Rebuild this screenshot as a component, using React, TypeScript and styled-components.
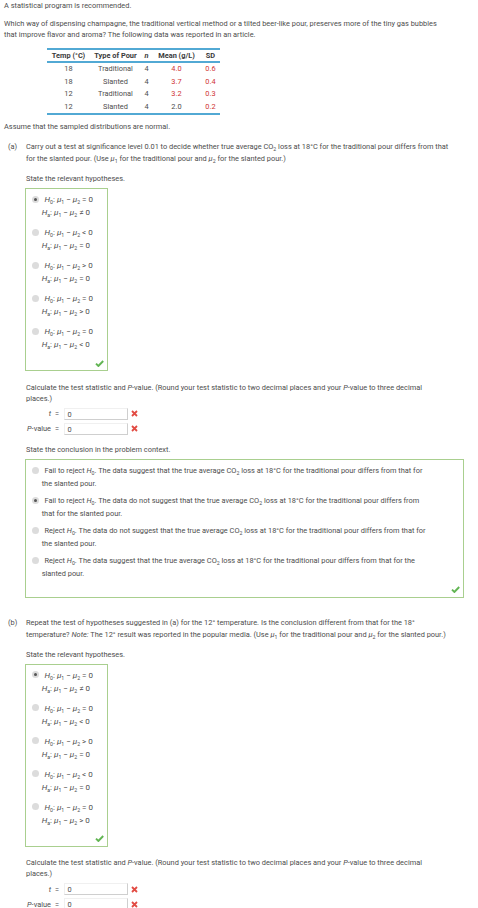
import React from "react";
import styled, { createGlobalStyle } from "styled-components";

const GlobalStyle = createGlobalStyle`
  html, body {
    margin: 0;
    padding: 0;
    background: #ffffff;
  }
  body {
    font-family: Roboto, "Noto Sans", "Liberation Sans", sans-serif;
    font-size: 7.4px;
    color: #4d4d4d;
  }
  sub {
    font-size: 5.2px;
    line-height: 0;
    vertical-align: -1.8px;
  }
`;

const Page = styled.div`
  width: 478px;
  box-sizing: border-box;
  padding: 0 0 12px 4px;
`;

const Para = styled.p<{ $mt?: number; $lh?: number }>`
  margin: ${(p) => p.$mt ?? 0}px 0 0;
  line-height: ${(p) => p.$lh ?? 11}px;
  white-space: nowrap;
`;

const I = styled.i`
  font-style: italic;
`;

const DataTable = styled.table`
  margin: 8.5px 0 0 43px;
  border-collapse: collapse;
  table-layout: fixed;
  width: 173px;
  border-top: 2px solid #52a9d4;
  border-bottom: 2px solid #52a9d4;
`;

const Th = styled.th<{ $w: number }>`
  width: ${(p) => p.$w}px;
  height: 11px;
  padding: 0;
  font-weight: 700;
  color: #3a3a3a;
  text-align: center;
  line-height: 11px;
  white-space: nowrap;
  border-bottom: 2px solid #52a9d4;
`;

const Td = styled.td<{ $red?: boolean }>`
  height: 12.6px;
  padding: 0;
  text-align: center;
  line-height: 12.6px;
  color: ${(p) => (p.$red ? "#d03434" : "#4d4d4d")};
`;

const Part = styled.section<{ $mt: number }>`
  display: flex;
  margin-top: ${(p) => p.$mt}px;
`;

const PartLabel = styled.div`
  flex: 0 0 18px;
  padding-left: 4px;
  line-height: 12px;
`;

const PartBody = styled.div`
  flex: 1;
  min-width: 0;
`;

const ChoiceBox = styled.div<{ $w: number; $mt?: number }>`
  width: ${(p) => p.$w}px;
  margin: ${(p) => p.$mt ?? 4}px 0 0 -1px;
  box-sizing: border-box;
  border: 1px solid #a9cf8f;
  padding: 4px 3px 2px 0;
`;

const HypOption = styled.div`
  padding-left: 15.7px;
  margin-bottom: 7px;
  font-size: 8px;
  line-height: 13px;
  white-space: nowrap;

  &:last-of-type {
    margin-bottom: 0;
  }
`;

const ConclOption = styled.div`
  padding-left: 15.7px;
  margin-bottom: 4px;
  line-height: 13px;
  white-space: nowrap;

  &:last-of-type {
    margin-bottom: 0;
  }
`;

const Radio = styled.span<{ $checked?: boolean }>`
  display: inline-block;
  position: relative;
  width: 7px;
  height: 7px;
  border-radius: 50%;
  background: #dcdcdc;
  vertical-align: middle;
  margin: -2px 6px 0 -10.2px;

  &::after {
    content: "";
    display: ${(p) => (p.$checked ? "block" : "none")};
    position: absolute;
    left: 2px;
    top: 2px;
    width: 3px;
    height: 3px;
    border-radius: 50%;
    background: #555;
  }
`;

const CheckRow = styled.div<{ $mt: number }>`
  display: flex;
  justify-content: flex-end;
  align-items: center;
  height: 10px;
  margin-top: ${(p) => p.$mt}px;
`;

const AnswerRow = styled.div<{ $mt: number }>`
  display: flex;
  align-items: center;
  height: 12px;
  margin-top: ${(p) => p.$mt}px;
`;

const AnswerLabel = styled.span`
  width: 26px;
  padding-right: 1px;
  box-sizing: border-box;
  text-align: right;
`;

const Equals = styled.span`
  width: 10px;
  text-align: center;
`;

const AnswerInput = styled.div`
  width: 64px;
  height: 12px;
  margin-left: 2px;
  box-sizing: border-box;
  padding-left: 2.5px;
  line-height: 11px;
  border: 1px solid;
  border-color: #f0f0f0 #cfcfcf #cfcfcf #f0f0f0;
`;

const Mark = styled.span`
  display: flex;
  justify-content: center;
  width: 13px;
`;

const Check = () => (
  <svg width="9" height="7" viewBox="0 0 9 7">
    <path d="M1 3.6 L3.4 6 L8.2 1" fill="none" stroke="#62b553" strokeWidth="1.9" />
  </svg>
);

const Cross = () => (
  <svg width="7" height="7" viewBox="0 0 7 7">
    <path d="M1 1 L6 6 M6 1 L1 6" stroke="#e24b43" strokeWidth="1.8" />
  </svg>
);

const Mu = ({ n }: { n: number }) => (
  <>
    <I>μ</I>
    <sub>{n}</sub>
  </>
);

const H = ({ s }: { s: string }) => (
  <>
    <I>H</I>
    <sub>{s}</sub>
  </>
);

const CO2 = () => (
  <>
    CO<sub>2</sub>
  </>
);

type Hyp = { h0: string; ha: string; checked?: boolean };

const hypA: Hyp[] = [
  { h0: "=", ha: "≠", checked: true },
  { h0: "<", ha: "=" },
  { h0: ">", ha: "=" },
  { h0: "=", ha: ">" },
  { h0: "=", ha: "<" },
];

const hypB: Hyp[] = [
  { h0: "=", ha: "≠", checked: true },
  { h0: "=", ha: "<" },
  { h0: ">", ha: "=" },
  { h0: "<", ha: "=" },
  { h0: "=", ha: ">" },
];

const conclusions = [
  { verdict: "Fail to reject", claim: "suggest", end: " that for", next: "the slanted pour." },
  { verdict: "Fail to reject", claim: "do not suggest", end: "", next: "that for the slanted pour.", checked: true },
  { verdict: "Reject", claim: "do not suggest", end: " that for", next: "the slanted pour." },
  { verdict: "Reject", claim: "suggest", end: " that for the", next: "slanted pour." },
];

const rows = [
  { temp: 18, pour: "Traditional", n: 4, mean: "4.0", meanRed: true, sd: "0.6" },
  { temp: 18, pour: "Slanted", n: 4, mean: "3.7", meanRed: true, sd: "0.4" },
  { temp: 12, pour: "Traditional", n: 4, mean: "3.2", meanRed: true, sd: "0.3" },
  { temp: 12, pour: "Slanted", n: 4, mean: "2.0", meanRed: false, sd: "0.2" },
];

const Hypotheses = ({ items }: { items: Hyp[] }) => (
  <ChoiceBox $w={82.5}>
    {items.map((h, i) => (
      <HypOption key={i}>
        <Radio $checked={h.checked} />
        <H s="0" />: <Mu n={1} /> − <Mu n={2} /> {h.h0} 0
        <br />
        <H s="a" />: <Mu n={1} /> − <Mu n={2} /> {h.ha} 0
      </HypOption>
    ))}
    <CheckRow $mt={5}>
      <Check />
    </CheckRow>
  </ChoiceBox>
);

const Answers = () => (
  <>
    <Para $mt={10.5}>
      Calculate the test statistic and <I>P</I>-value. (Round your test statistic to two decimal places and your{" "}
      <I>P</I>-value to three decimal
      <br />
      places.)
    </Para>
    <AnswerRow $mt={4}>
      <AnswerLabel>
        <I>t</I>
      </AnswerLabel>
      <Equals>=</Equals>
      <AnswerInput>0</AnswerInput>
      <Mark>
        <Cross />
      </Mark>
    </AnswerRow>
    <AnswerRow $mt={3}>
      <AnswerLabel>
        <I>P</I>-value
      </AnswerLabel>
      <Equals>=</Equals>
      <AnswerInput>0</AnswerInput>
      <Mark>
        <Cross />
      </Mark>
    </AnswerRow>
  </>
);

export default function App() {
  return (
    <>
      <GlobalStyle />
      <Page>
        <Para>A statistical program is recommended.</Para>
        <Para $mt={6.5}>
          Which way of dispensing champagne, the traditional vertical method or a tilted beer-like pour, preserves more
          of the tiny gas bubbles
          <br />
          that improve flavor and aroma? The following data was reported in an article.
        </Para>

        <DataTable>
          <thead>
            <tr>
              <Th $w={43}>Temp (°C)</Th>
              <Th $w={51}>Type of Pour</Th>
              <Th $w={11}>
                <I>n</I>
              </Th>
              <Th $w={49}>Mean (g/L)</Th>
              <Th $w={19}>SD</Th>
            </tr>
          </thead>
          <tbody>
            {rows.map((r, i) => (
              <tr key={i}>
                <Td>{r.temp}</Td>
                <Td>{r.pour}</Td>
                <Td>{r.n}</Td>
                <Td $red={r.meanRed}>{r.mean}</Td>
                <Td $red>{r.sd}</Td>
              </tr>
            ))}
          </tbody>
        </DataTable>

        <Para $mt={6}>Assume that the sampled distributions are normal.</Para>

        <Part $mt={8.8}>
          <PartLabel>(a)</PartLabel>
          <PartBody>
            <Para $lh={12}>
              Carry out a test at significance level 0.01 to decide whether true average <CO2 /> loss at 18°C for the
              traditional pour differs from that
              <br />
              for the slanted pour. (Use <Mu n={1} /> for the traditional pour and <Mu n={2} /> for the slanted pour.)
            </Para>
            <Para $mt={8.2}>State the relevant hypotheses.</Para>
            <Hypotheses items={hypA} />
            <Answers />
            <Para $mt={9.3}>State the conclusion in the problem context.</Para>
            <ChoiceBox $w={438.5}>
              {conclusions.map((c, i) => (
                <ConclOption key={i}>
                  <Radio $checked={c.checked} />
                  {c.verdict} <H s="0" />. The data {c.claim} that the true average <CO2 /> loss at 18°C for the
                  traditional pour differs from{c.end}
                  <br />
                  {c.next}
                </ConclOption>
              ))}
              <CheckRow $mt={4.6}>
                <Check />
              </CheckRow>
            </ChoiceBox>
          </PartBody>
        </Part>

        <Part $mt={19}>
          <PartLabel>(b)</PartLabel>
          <PartBody>
            <Para $lh={12}>
              Repeat the test of hypotheses suggested in (a) for the 12° temperature. Is the conclusion different from
              that for the 18°
              <br />
              temperature? <I>Note:</I> The 12° result was reported in the popular media. (Use <Mu n={1} /> for the
              traditional pour and <Mu n={2} /> for the slanted pour.)
            </Para>
            <Para $mt={8.2}>State the relevant hypotheses.</Para>
            <Hypotheses items={hypB} />
            <Answers />
          </PartBody>
        </Part>
      </Page>
    </>
  );
}
